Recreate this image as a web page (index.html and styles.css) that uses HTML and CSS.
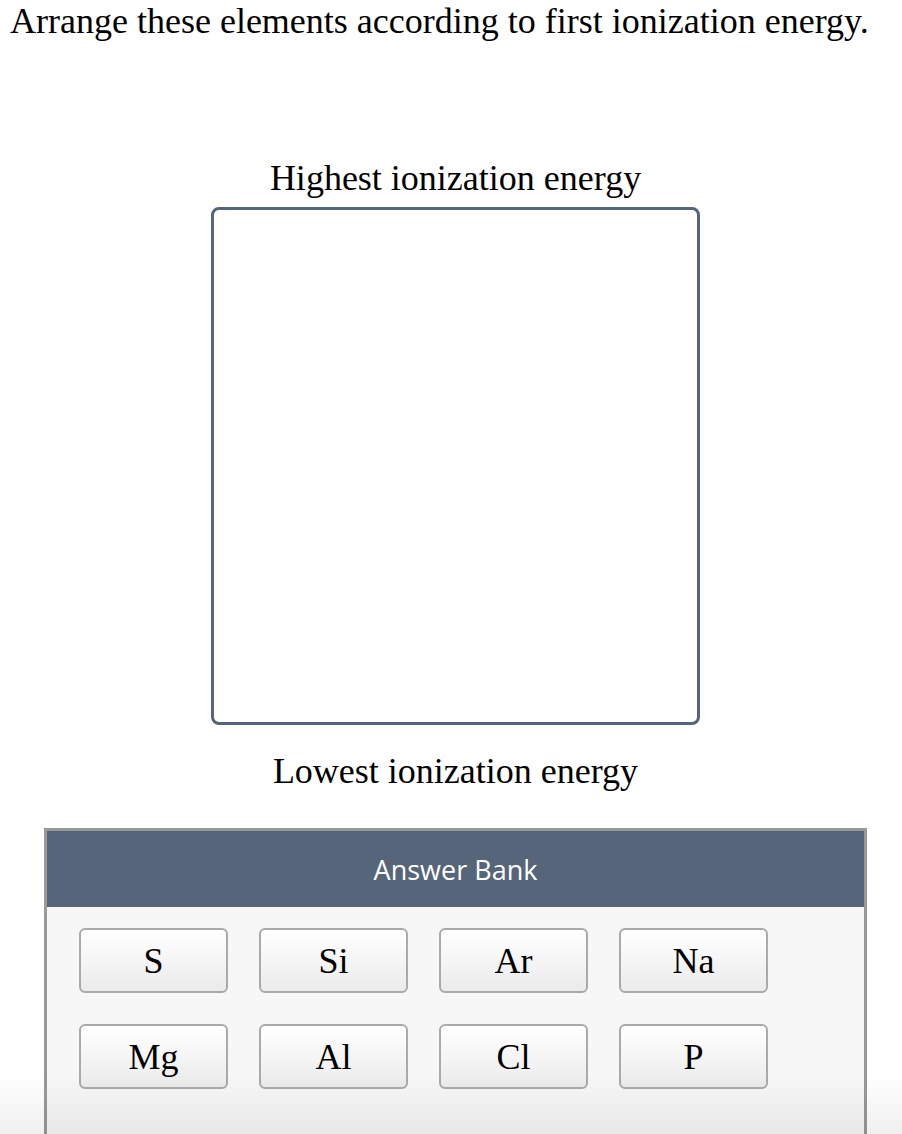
FILE: index.html
```html
<!DOCTYPE html>
<html lang="en">
<head>
    <meta charset="UTF-8">
    <meta name="viewport" content="width=device-width, initial-scale=1.0">
    <title>Ionization energy ranking</title>
    <link rel="stylesheet" href="styles.css">
</head>
<body>
    <p class="prompt">Arrange these elements according to first ionization energy.</p>

    <div class="question">
        <div class="ranking">
            <div class="rank-label">Highest ionization energy</div>
            <div class="drop-zone"></div>
            <div class="rank-label rank-label-low">Lowest ionization energy</div>
        </div>

        <div class="answer-bank">
            <div class="bank-header">Answer Bank</div>
            <div class="bank-items">
                <button class="chip">S</button>
                <button class="chip">Si</button>
                <button class="chip">Ar</button>
                <button class="chip">Na</button>
                <button class="chip">Mg</button>
                <button class="chip">Al</button>
                <button class="chip">Cl</button>
                <button class="chip">P</button>
            </div>
        </div>
    </div>

    <div class="bottom-fade"></div>
</body>
</html>
```

FILE: styles.css
```css
body {
    margin: 0 8px;
    background-color: #fff;
    color: #000;
    font-family: 'Liberation Serif', 'Times New Roman', serif;
}

.prompt {
    margin: 0;
    padding-left: 2px;
    font-size: 36px;
    line-height: normal;
}

.question {
    width: 823px;
    margin-left: 36px;
}

.ranking {
    display: flex;
    flex-direction: column;
    align-items: center;
    padding-top: 118px;
}

.rank-label {
    font-size: 36px;
    line-height: 37px;
    margin-bottom: 10px;
}

.rank-label-low {
    margin: 28px 0 38px;
}

.drop-zone {
    width: 483px;
    height: 512px;
    border: 3px solid #56657a;
    border-radius: 8px;
}

.answer-bank {
    border: 3px solid #999;
    border-bottom: none;
    background-color: #f7f7f7;
    min-height: 320px;
}

.bank-header {
    height: 76px;
    background-color: #566579;
    color: #fff;
    font-family: 'Open Sans', 'Noto Sans', sans-serif;
    font-size: 27px;
    display: flex;
    align-items: center;
    justify-content: center;
}

.bank-items {
    display: grid;
    grid-template-columns: repeat(4, 149px);
    column-gap: 31px;
    row-gap: 31px;
    padding: 21px 32px;
}

.chip {
    height: 65px;
    border: 2px solid #aaa;
    border-radius: 6px;
    background: linear-gradient(#fff, #ebebeb);
    font-family: 'Liberation Serif', 'Times New Roman', serif;
    font-size: 36px;
    color: #000;
    padding: 0;
    cursor: pointer;
}

.bottom-fade {
    position: fixed;
    left: 0;
    right: 0;
    bottom: 0;
    height: 60px;
    background: linear-gradient(rgba(0, 0, 0, 0), rgba(0, 0, 0, 0.06));
    pointer-events: none;
}
```
